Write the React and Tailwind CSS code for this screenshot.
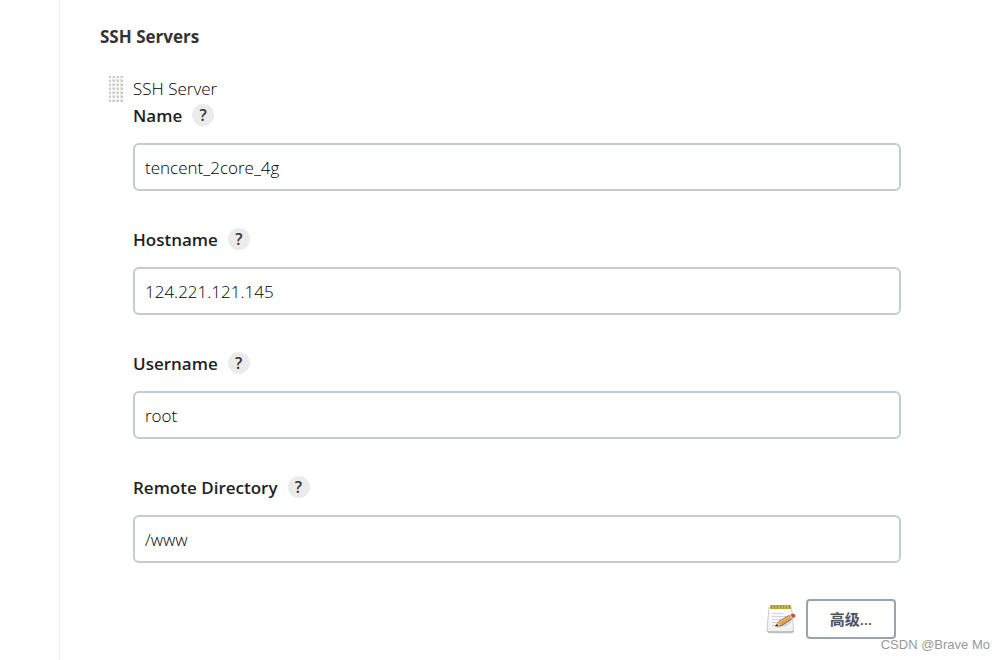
import { useState } from "react";

const fields = [
  { id: "name", label: "Name", value: "tencent_2core_4g" },
  { id: "hostname", label: "Hostname", value: "124.221.121.145" },
  { id: "username", label: "Username", value: "root" },
  { id: "remoteDirectory", label: "Remote Directory", value: "/www" },
];

const rows = [0, 4, 8, 12, 16, 20, 24];
const columns = [0, 4, 8, 12];

const DragHandle = () => (
  <svg viewBox="0 0 14 26" className="w-[14px] h-[26px]">
    {rows.map((y) =>
      columns.map((x) => (
        <g key={`${x}-${y}`}>
          <rect x={x - 1} y={y - 1} width="3" height="3" fill="#e4e4e1" />
          <rect x={x} y={y} width="2" height="2" fill="#c9c9c5" />
        </g>
      ))
    )}
  </svg>
);

const NotepadIcon = () => (
  <svg viewBox="0 0 30 30" className="w-[30px] h-[30px]">
    <defs>
      <linearGradient id="paper" x1="0" y1="0" x2="0" y2="1">
        <stop offset="0" stopColor="#ffffff" />
        <stop offset="1" stopColor="#f0f0f0" />
      </linearGradient>
    </defs>
    <path d="M2 28 H28 L27 29.5 H3 Z" fill="#e2e2e2" />
    <path d="M3 3.5 H25.5 L27.5 25.5 Q27.5 28 26 28 H2.5 Q1 28 1 25.5 Z" fill="url(#paper)" stroke="#cccccc" strokeWidth="1" />
    <path d="M1.5 26.5 Q1.5 28 3 28 H26 Q27.5 28 27.5 26.5" fill="none" stroke="#a8a8a8" strokeWidth="1" />
    <path d="M6 9.5 H17 M6 12.5 H20 M6 15.5 H15 M6 18.5 H13 M6 21.5 H10" stroke="#d4d4d4" strokeWidth="1" />
    <rect x="4" y="1" width="21" height="4" fill="#c4b73c" />
    <path
      d="M5.5 1 V5 M8.5 1 V5 M11.5 1 V5 M14.5 1 V5 M17.5 1 V5 M20.5 1 V5 M23.5 1 V5"
      stroke="#a09225"
      strokeWidth="1"
    />
    <path d="M11 23 L20 21 L25 17.5" fill="none" stroke="#d2d2d2" strokeWidth="2" />
    <path d="M9.5 22 L13 17.5 L23 11.5 L26 15 L15.5 21.5 Z" fill="#dfa04c" stroke="#8c602c" strokeWidth="1" />
    <path d="M13.5 18.2 L23 12.7" stroke="#f3cb88" strokeWidth="1" />
    <path d="M9.5 22 L12.5 18.2 L14.8 21.2 Z" fill="#e5cfa0" />
    <path d="M9 22.5 L11 20 L12.4 21.7 Z" fill="#40372a" />
    <path d="M22.5 11.8 L24.6 10.5 L27.2 14.2 L25.4 15.4 Z" fill="#b9b9b9" />
    <path d="M24.6 10.5 L26.5 9.5 Q29.5 9.5 29.5 12.5 L27.2 14.2 Z" fill="#dc4a3a" />
  </svg>
);

const HelpButton = ({ label }) => (
  <button
    type="button"
    aria-label={`Help for ${label}`}
    className="flex items-center justify-center w-[22px] h-[22px] rounded-full bg-[#ebebeb] text-base leading-[22px] font-semibold text-[#333333]"
  >
    ?
  </button>
);

const Field = ({ id, label, value, onChange }) => (
  <div>
    <div className="flex items-center gap-[10px] h-[22px]">
      <label htmlFor={id} className="pt-[2px] text-[17px] leading-[22px] font-semibold text-[#1f1f1f]">
        {label}
      </label>
      <HelpButton label={label} />
    </div>
    <input
      id={id}
      type="text"
      value={value}
      onChange={(e) => onChange(id, e.target.value)}
      className="block w-full h-12 mt-[17px] px-[10px] text-[17px] font-light text-black bg-white border-2 border-[#c3cdd1] rounded-md outline-none focus:border-[#0b6aa2]"
    />
  </div>
);

const App = () => {
  const [values, setValues] = useState(
    Object.fromEntries(fields.map((field) => [field.id, field.value]))
  );

  const handleChange = (id, value) => {
    setValues((current) => ({ ...current, [id]: value }));
  };

  return (
    <div className="relative flex min-h-screen bg-white font-['Open_Sans','Noto_Sans_CJK_SC',sans-serif] text-[#333333]">
      <div className="w-[60px] shrink-0 border-r border-[#f0f0f0]" />
      <main className="flex-1 min-w-0 pt-[26px] pl-10 pr-[103px]">
        <h2 className="text-[17px] leading-[22px] font-bold">SSH Servers</h2>

        <form className="pl-[33px]" onSubmit={(e) => e.preventDefault()}>
          <div className="flex items-center gap-[10px] -ml-6 mt-7 h-[26px]">
            <DragHandle />
            <span className="text-[17px] leading-[22px] font-light text-black">SSH Server</span>
          </div>

          <div className="flex flex-col gap-[37px] mt-[2px]">
            {fields.map((field) => (
              <Field
                key={field.id}
                id={field.id}
                label={field.label}
                value={values[field.id]}
                onChange={handleChange}
              />
            ))}
          </div>

          <div className="flex items-center justify-end gap-[10px] mt-9 pr-[5px]">
            <NotepadIcon />
            <button
              type="button"
              className="h-10 w-[90px] text-[15px] font-semibold text-[#4d545d] bg-white border-2 border-[#98a5b1] rounded"
            >
              高级...
            </button>
          </div>
        </form>
      </main>

      <span className="absolute right-[14px] bottom-[5px] font-['Liberation_Sans',sans-serif] text-[13px] leading-5 text-[#999999]">
        CSDN @Brave Mo
      </span>
    </div>
  );
};

export default App;
